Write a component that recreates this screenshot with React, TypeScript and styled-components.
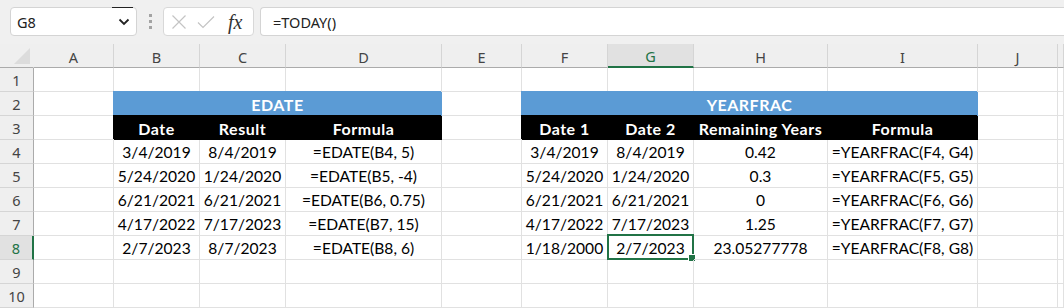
import React from "react";
import styled, { createGlobalStyle, css } from "styled-components";

const GlobalStyle = createGlobalStyle`
  html, body { margin: 0; padding: 0; background: #ffffff; overflow: hidden; }
  * { box-sizing: border-box; }
`;

const Page = styled.div`
  width: 1064px;
  height: 308px;
  display: flex;
  flex-direction: column;
  background: #ffffff;
`;

const Toolbar = styled.div`
  height: 44px;
  background: #f0f0f0;
  display: flex;
  align-items: center;
  padding: 0 0 1px 10px;
  gap: 0;
`;

const NameBox = styled.div`
  position: relative;
  width: 127px;
  height: 29px;
  background: #fff;
  border: 1px solid #d4d4d4;
  border-radius: 4px;
  display: flex;
  align-items: center;
  justify-content: space-between;
  padding: 0 6px 0 6px;
  font-family: "Noto Sans", "Open Sans", sans-serif;
  font-size: 14.5px;
  color: #222;
  &::after {
    content: "";
    position: absolute;
    top: -1px;
    right: 3px;
    width: 21px;
    height: 1px;
    background: #222;
  }
`;

const Dots = styled.div`
  width: 26px;
  display: flex;
  flex-direction: column;
  align-items: center;
  gap: 3px;
  & > span {
    width: 3px;
    height: 3px;
    background: #a3a3a3;
  }
`;

const FxBox = styled.div`
  width: 91px;
  height: 29px;
  background: #fff;
  border: 1px solid #d8d8d8;
  border-radius: 4px;
  display: flex;
  align-items: center;
  padding: 0 6px 0 7px;
  gap: 10px;
`;

const FxText = styled.span`
  font-family: "Liberation Serif", "DejaVu Serif", serif;
  font-style: italic;
  font-size: 20px;
  color: #333;
  margin-left: 3px;
  line-height: 1;
`;

const FormulaInput = styled.div`
  flex: 1;
  margin-left: 6px;
  height: 29px;
  background: #fff;
  border: 1px solid #d4d4d4;
  border-right: none;
  border-radius: 4px 0 0 4px;
  display: flex;
  align-items: center;
  padding-left: 12px;
  font-family: "Noto Sans", "Open Sans", sans-serif;
  font-size: 14.5px;
  color: #222;
`;

const Sheet = styled.div`
  display: grid;
  grid-template-columns: 34px 80px 86px 86px 156px 80px 86px 86px 134px 150px 80px 1fr;
  grid-auto-rows: 24px;
`;

const HeadCell = styled.div<{ $sel?: boolean; $corner?: boolean }>`
  background: ${(p) => (p.$sel ? "#e1e1e1" : "#efefef")};
  border-right: 1px solid ${(p) => (p.$corner ? "#efefef" : "#d5d5d5")};
  border-bottom: ${(p) => (p.$sel ? "2px solid #217346" : "1px solid #ababab")};
  display: flex;
  align-items: center;
  justify-content: center;
  font-family: "Noto Sans", "Open Sans", sans-serif;
  font-size: 14.5px;
  color: ${(p) => (p.$sel ? "#217346" : "#444")};
  padding-top: 2px;
  position: relative;
`;

const Corner = styled.div`
  position: absolute;
  right: 3px;
  bottom: 3px;
  width: 0;
  height: 0;
  border-left: 16px solid transparent;
  border-bottom: 16px solid #dcdcdc;
`;

const RowHead = styled.div<{ $sel?: boolean }>`
  background: ${(p) => (p.$sel ? "#e1e1e1" : "#efefef")};
  border-right: ${(p) => (p.$sel ? "2px solid #217346" : "1px solid #ababab")};
  border-bottom: 1px solid #d5d5d5;
  display: flex;
  align-items: center;
  justify-content: center;
  font-family: "Noto Sans", "Open Sans", sans-serif;
  font-size: 14.5px;
  color: ${(p) => (p.$sel ? "#217346" : "#444")};
  padding-top: 1px;
`;

type Fill = "blue" | "black" | undefined;

const fillColor = (f: Fill) => (f === "blue" ? "#5b9bd5" : f === "black" ? "#000000" : undefined);

const Cell = styled.div<{ $fill?: Fill; $span?: number }>`
  position: relative;
  border-right: 1px solid #e1e1e1;
  border-bottom: 1px solid #e1e1e1;
  display: flex;
  align-items: center;
  justify-content: center;
  white-space: nowrap;
  font-family: "Lato", "Open Sans", sans-serif;
  font-size: 15.6px;
  color: #000;
  padding-top: 1px;
  ${(p) => p.$span && css`grid-column: span ${p.$span};`}
  ${(p) =>
    p.$fill &&
    css`
      background: ${fillColor(p.$fill)};
      border-color: ${fillColor(p.$fill)};
      box-shadow: -1px -1px 0 0 ${fillColor(p.$fill)};
      color: #fff;
      font-weight: 700;
      font-size: 16px;
      letter-spacing: 0.5px;
    `}
`;

const Selection = styled.div`
  position: absolute;
  top: -2px;
  left: -1px;
  right: -1px;
  bottom: -1px;
  border: 2px solid #217346;
  pointer-events: none;
  &::after {
    content: "";
    position: absolute;
    right: -4px;
    bottom: -4px;
    width: 6px;
    height: 6px;
    background: #217346;
    border: 1px solid #fff;
  }
`;

const COLS = ["A", "B", "C", "D", "E", "F", "G", "H", "I", "J", ""];

type CellDef = { text?: string; fill?: Fill; span?: number; sel?: boolean };

const blankRow = (): CellDef[] => COLS.map(() => ({}));

const dataRows: string[][] = [
  ["3/4/2019", "8/4/2019", "=EDATE(B4, 5)", "3/4/2019", "8/4/2019", "0.42", "=YEARFRAC(F4, G4)"],
  ["5/24/2020", "1/24/2020", "=EDATE(B5, -4)", "5/24/2020", "1/24/2020", "0.3", "=YEARFRAC(F5, G5)"],
  ["6/21/2021", "6/21/2021", "=EDATE(B6, 0.75)", "6/21/2021", "6/21/2021", "0", "=YEARFRAC(F6, G6)"],
  ["4/17/2022", "7/17/2023", "=EDATE(B7, 15)", "4/17/2022", "7/17/2023", "1.25", "=YEARFRAC(F7, G7)"],
  ["2/7/2023", "8/7/2023", "=EDATE(B8, 6)", "1/18/2000", "2/7/2023", "23.05277778", "=YEARFRAC(F8, G8)"],
];

const buildRows = (): CellDef[][] => {
  const rows: CellDef[][] = [];
  rows.push(blankRow());
  rows.push([
    {},
    { text: "EDATE", fill: "blue", span: 3 },
    {},
    { text: "YEARFRAC", fill: "blue", span: 4 },
    {},
    {},
  ]);
  rows.push([
    {},
    { text: "Date", fill: "black" },
    { text: "Result", fill: "black" },
    { text: "Formula", fill: "black" },
    {},
    { text: "Date 1", fill: "black" },
    { text: "Date 2", fill: "black" },
    { text: "Remaining Years", fill: "black" },
    { text: "Formula", fill: "black" },
    {},
    {},
  ]);
  dataRows.forEach((d, i) => {
    rows.push([
      {},
      { text: d[0] },
      { text: d[1] },
      { text: d[2] },
      {},
      { text: d[3] },
      { text: d[4], sel: i === 4 },
      { text: d[5] },
      { text: d[6] },
      {},
      {},
    ]);
  });
  rows.push(blankRow());
  rows.push(blankRow());
  return rows;
};

const XIcon = () => (
  <svg width="16" height="16" viewBox="0 0 16 16">
    <path d="M1.5 1.5 L14.5 14.5 M14.5 1.5 L1.5 14.5" stroke="#c4c4c4" strokeWidth="1.2" fill="none" />
  </svg>
);

const CheckIcon = () => (
  <svg width="18" height="14" viewBox="0 0 18 14">
    <path d="M1 7.5 L6 12.5 L17 1.5" stroke="#c4c4c4" strokeWidth="1.2" fill="none" />
  </svg>
);

const Chevron = () => (
  <svg width="12" height="8" viewBox="0 0 12 8">
    <path d="M1.5 1.5 L6 6 L10.5 1.5" stroke="#222" strokeWidth="1.8" fill="none" />
  </svg>
);

export default function App() {
  const rows = buildRows();
  return (
    <Page>
      <GlobalStyle />
      <Toolbar>
        <NameBox>
          <span>G8</span>
          <Chevron />
        </NameBox>
        <Dots>
          <span />
          <span />
          <span />
        </Dots>
        <FxBox>
          <XIcon />
          <CheckIcon />
          <FxText>fx</FxText>
        </FxBox>
        <FormulaInput>=TODAY()</FormulaInput>
      </Toolbar>
      <Sheet>
        <HeadCell $corner>
          <Corner />
        </HeadCell>
        {COLS.map((c, i) => (
          <HeadCell key={i} $sel={c === "G"}>
            {c}
          </HeadCell>
        ))}
        {rows.map((r, ri) => (
          <React.Fragment key={ri}>
            <RowHead $sel={ri === 7}>{ri + 1}</RowHead>
            {r.map((c, ci) => (
              <Cell key={ci} $fill={c.fill} $span={c.span}>
                {c.text}
                {c.sel && <Selection />}
              </Cell>
            ))}
          </React.Fragment>
        ))}
      </Sheet>
    </Page>
  );
}
